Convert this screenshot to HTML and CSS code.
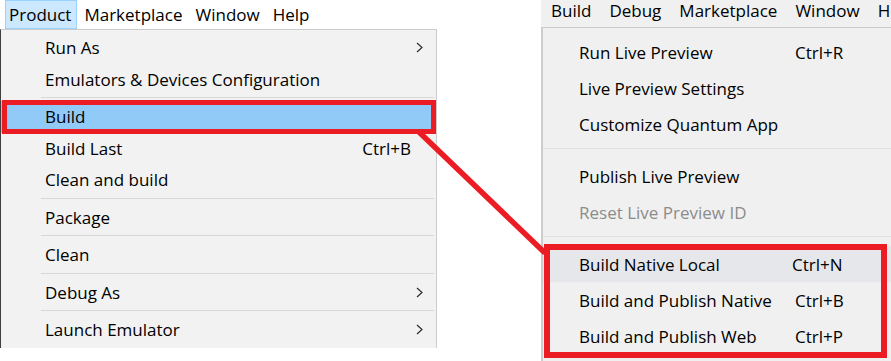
FILE: index.html
```html
<!DOCTYPE html>
<html>
<head>
<meta charset="utf-8">
<title>Menus</title>
<link rel="stylesheet" href="styles.css">
</head>
<body>
<div class="page">
  <section class="pane-left">
    <nav class="menubar-l">
      <span class="mb-l active">Product</span>
      <span class="mb-l">Marketplace</span>
      <span class="mb-l">Window</span>
      <span class="mb-l">Help</span>
    </nav>
    <div class="menu-l">
      <div class="row-l"><span class="label">Run As</span><span class="arrow"><svg width="7" height="11" viewBox="0 0 7 11"><polyline points="1,1 6,5.5 1,10" fill="none" stroke="#2b2b2b" stroke-width="1.2"/></svg></span></div>
      <div class="row-l"><span class="label">Emulators &amp; Devices Configuration</span><span class="arrow"></span></div>
      <div class="sep-l"></div>
      <div class="row-l hot"><span class="label">Build</span><span class="arrow"></span></div>
      <div class="row-l"><span class="label">Build Last</span><span class="key">Ctrl+B</span><span class="arrow"></span></div>
      <div class="row-l"><span class="label">Clean and build</span><span class="arrow"></span></div>
      <div class="sep-l"></div>
      <div class="row-l"><span class="label">Package</span><span class="arrow"></span></div>
      <div class="sep-l"></div>
      <div class="row-l"><span class="label">Clean</span><span class="arrow"></span></div>
      <div class="sep-l"></div>
      <div class="row-l"><span class="label">Debug As</span><span class="arrow"><svg width="7" height="11" viewBox="0 0 7 11"><polyline points="1,1 6,5.5 1,10" fill="none" stroke="#2b2b2b" stroke-width="1.2"/></svg></span></div>
      <div class="sep-l"></div>
      <div class="row-l"><span class="label">Launch Emulator</span><span class="arrow"><svg width="7" height="11" viewBox="0 0 7 11"><polyline points="1,1 6,5.5 1,10" fill="none" stroke="#2b2b2b" stroke-width="1.2"/></svg></span></div>
    </div>
  </section>

  <section class="pane-right">
    <nav class="menubar-r">
      <span class="mb-r">Build</span>
      <span class="mb-r">Debug</span>
      <span class="mb-r">Marketplace</span>
      <span class="mb-r">Window</span>
      <span class="mb-r">Help</span>
    </nav>
    <div class="menu-r">
      <div class="row-r"><span class="label">Run Live Preview</span><span class="key">Ctrl+R</span></div>
      <div class="row-r"><span class="label">Live Preview Settings</span><span class="key"></span></div>
      <div class="row-r"><span class="label">Customize Quantum App</span><span class="key"></span></div>
      <div class="sep-r"></div>
      <div class="row-r"><span class="label">Publish Live Preview</span><span class="key"></span></div>
      <div class="row-r disabled"><span class="label">Reset Live Preview ID</span><span class="key"></span></div>
      <div class="sep-r"></div>
      <div class="row-r hot"><span class="label">Build Native Local</span><span class="key key-n">Ctrl+N</span></div>
      <div class="row-r"><span class="label">Build and Publish Native</span><span class="key">Ctrl+B</span></div>
      <div class="row-r"><span class="label">Build and Publish Web</span><span class="key">Ctrl+P</span></div>
    </div>
  </section>
</div>

<div class="callout callout-left"></div>
<div class="callout callout-right"></div>
<svg class="connector" width="891" height="361" viewBox="0 0 891 361">
  <line x1="419" y1="132" x2="545" y2="253" stroke="#ec1c24" stroke-width="5.5"/>
</svg>
</body>
</html>
```

FILE: styles.css
```css
html, body {
  margin: 0;
  padding: 0;
}

body {
  position: relative;
  width: 891px;
  height: 361px;
  overflow: hidden;
  background: #ffffff;
  font-family: "Open Sans", "Noto Sans", sans-serif;
  font-size: 17px;
  color: #000000;
}

.page {
  display: flex;
  align-items: flex-start;
}

/* ---------- left pane ---------- */
.pane-left {
  width: 437px;
  flex: none;
}

.menubar-l {
  display: flex;
  height: 29px;
  padding-left: 5px;
}

.mb-l {
  line-height: 27px;
  padding: 0 5px 0 3px;
  margin-right: 3px;
  border: 1px solid transparent;
  white-space: nowrap;
}

.mb-l.active {
  background: #cce8ff;
  border-color: #99d1ff;
}

.menu-l {
  height: 316px;
  padding-top: 2px;
  background: #f2f2f2;
  border-left: 1px solid #3f3f3f;
  border-top: 1px solid #cccccc;
  border-right: 1px solid #cccccc;
  box-sizing: content-box;
  width: 435px;
}

.row-l {
  display: flex;
  align-items: center;
  height: 31.5px;
  padding: 0 13px 0 44px;
  white-space: nowrap;
}

.row-l .label {
  flex: 1;
}

.row-l .key {
  flex: none;
}

.row-l .arrow {
  flex: none;
  width: 12px;
  display: flex;
  justify-content: flex-end;
  align-items: center;
}

.row-l .arrow svg {
  display: block;
}

.row-l.hot {
  background: #91c9f7;
}

.sep-l {
  height: 1px;
  margin: 2px 2px 3px 40px;
  background: #d7d7d7;
}

/* ---------- right pane ---------- */
.pane-right {
  margin-left: 104px;
  width: 350px;
  flex: none;
}

.menubar-r {
  display: flex;
  height: 27px;
  padding-left: 1px;
  background: #f0f0f0;
  white-space: nowrap;
  overflow: hidden;
}

.mb-r {
  line-height: 22px;
  padding: 0 9px;
}

.menu-r {
  height: 340px;
  padding-top: 6px;
  background: #f0f0f0;
  border-top: 1px solid #cccccc;
  border-left: 2px solid #cdcdcd;
}

.row-r {
  display: grid;
  grid-template-columns: 216px auto;
  align-items: center;
  height: 36px;
  padding-left: 36px;
  white-space: nowrap;
}

.row-r.hot {
  background: #e6e7eb;
}

.row-r.disabled {
  color: #8c8c8c;
}

.key-n {
  margin-left: -3px;
}

.sep-r {
  height: 1px;
  margin: 6px 0 9px 0;
  background: #e0e0e0;
}

/* ---------- annotations (overlay) ---------- */
.callout {
  position: absolute;
  border: 5px solid #ec1c24;
  box-sizing: border-box;
  pointer-events: none;
}

.callout-left {
  left: 2px;
  top: 100px;
  width: 434px;
  height: 34px;
}

.callout-right {
  left: 544px;
  top: 244px;
  width: 343px;
  height: 114px;
  border-width: 6px;
}

.connector {
  position: absolute;
  left: 0;
  top: 0;
  pointer-events: none;
}
```
